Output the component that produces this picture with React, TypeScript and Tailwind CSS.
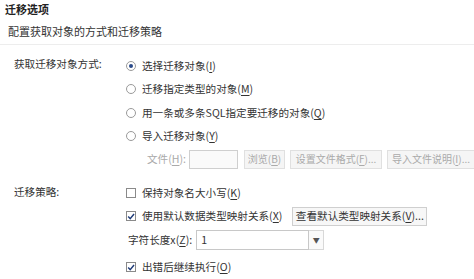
import React from "react";

const font = { fontFamily: '"Noto Sans CJK SC", "Noto Sans", sans-serif' };

function Radio({ checked }: { checked?: boolean }) {
  return (
    <span className="w-[10px] h-[10px] rounded-full border border-[#9a9a9a] bg-white flex items-center justify-center shrink-0">
      {checked && <span className="w-[4px] h-[4px] rounded-full bg-[#2a4a8a]" />}
    </span>
  );
}

function Check({ checked }: { checked?: boolean }) {
  return (
    <span className="w-[10px] h-[10px] border border-[#8a8a8a] bg-white flex items-center justify-center shrink-0">
      {checked && (
        <svg width="9" height="9" viewBox="0 0 10 10">
          <path d="M1.5 5 L4 7.8 L8.8 1.8" fill="none" stroke="#1f3b78" strokeWidth="1.8" />
        </svg>
      )}
    </span>
  );
}

function U({ c }: { c: string }) {
  return <span className="underline underline-offset-2">{c}</span>;
}

export default function App() {
  return (
    <div
      className="w-[474px] h-[279px] overflow-hidden bg-white text-[10.6px] leading-[14px] text-[#333] whitespace-nowrap"
      style={font}
    >
      <div className="border-b border-[#ededed] pb-[6px]">
        <div className="pl-[5px] pt-[2px] font-bold text-[11px] text-[#222]">迁移选项</div>
        <div className="pl-[8px] mt-[8px] text-[11px] text-[#333]">配置获取对象的方式和迁移策略</div>
      </div>

      <div className="flex mt-[12px]">
        <div className="w-[126px] shrink-0 pl-[14px]">获取迁移对象方式:</div>
        <div className="flex flex-col">
          <div className="h-[22px] flex items-center gap-[6px] mt-[-2px]">
            <Radio checked />
            <span>选择迁移对象(<U c="I" />)</span>
          </div>
          <div className="h-[24px] flex items-center gap-[6px]">
            <Radio />
            <span>迁移指定类型的对象(<U c="M" />)</span>
          </div>
          <div className="h-[24px] flex items-center gap-[6px]">
            <Radio />
            <span>用一条或多条SQL指定要迁移的对象(<U c="Q" />)</span>
          </div>
          <div className="h-[22px] flex items-center gap-[6px]">
            <Radio />
            <span>导入迁移对象(<U c="Y" />)</span>
          </div>
          <div className="h-[24px] flex items-center text-[#aaa]">
            <span className="ml-[21px] w-[42px] shrink-0">文件(<U c="H" />):</span>
            <span className="shrink-0 w-[49px] h-[19px] border border-[#cfcfcf] bg-[#fafafa]" />
            <span className="shrink-0 ml-[6px] h-[19px] w-[41px] justify-center border border-[#e0e0e0] bg-[#f5f5f5] flex items-center text-[10px]">浏览(<U c="B" />)</span>
            <span className="shrink-0 ml-[5px] h-[19px] w-[92px] justify-center border border-[#e0e0e0] bg-[#f5f5f5] flex items-center text-[10px]">设置文件格式(<U c="F" />)...</span>
            <span className="shrink-0 ml-[5px] h-[19px] w-[88px] justify-center border border-[#e0e0e0] bg-[#f5f5f5] flex items-center text-[10px]">导入文件说明(<U c="I" />)...</span>
          </div>
        </div>
      </div>

      <div className="flex mt-[12px]">
        <div className="w-[126px] shrink-0 pl-[14px] pt-[2px]">迁移策略:</div>
        <div className="flex flex-col">
          <div className="h-[22px] flex items-center gap-[6px] mt-[-1px]">
            <Check />
            <span>保持对象名大小写(<U c="K" />)</span>
          </div>
          <div className="h-[24px] flex items-center gap-[6px]">
            <Check checked />
            <span>使用默认数据类型映射关系(<U c="X" />)</span>
            <span className="shrink-0 ml-[4px] h-[19px] w-[135px] justify-center border border-[#cfcfcf] bg-[#f7f7f7] flex items-center">查看默认类型映射关系(<U c="V" />)...</span>
          </div>
        </div>
      </div>
      <div className="flex items-center h-[24px] pl-[128px]">
        <span>字符长度x(<U c="Z" />):</span>
        <span className="shrink-0 ml-[4px] w-[113px] h-[20px] border border-[#c8c8c8] bg-white flex items-center pl-[4px]">1</span>
        <span className="shrink-0 w-[15px] h-[20px] border border-l-0 border-[#d8d8d8] bg-[#fafafa] flex items-center justify-center text-[7px] text-[#555]">▼</span>
      </div>
      <div className="flex items-center h-[26px] pl-[126px] gap-[6px] mt-[2px]">
        <Check checked />
        <span>出错后继续执行(<U c="O" />)</span>
      </div>
    </div>
  );
}
